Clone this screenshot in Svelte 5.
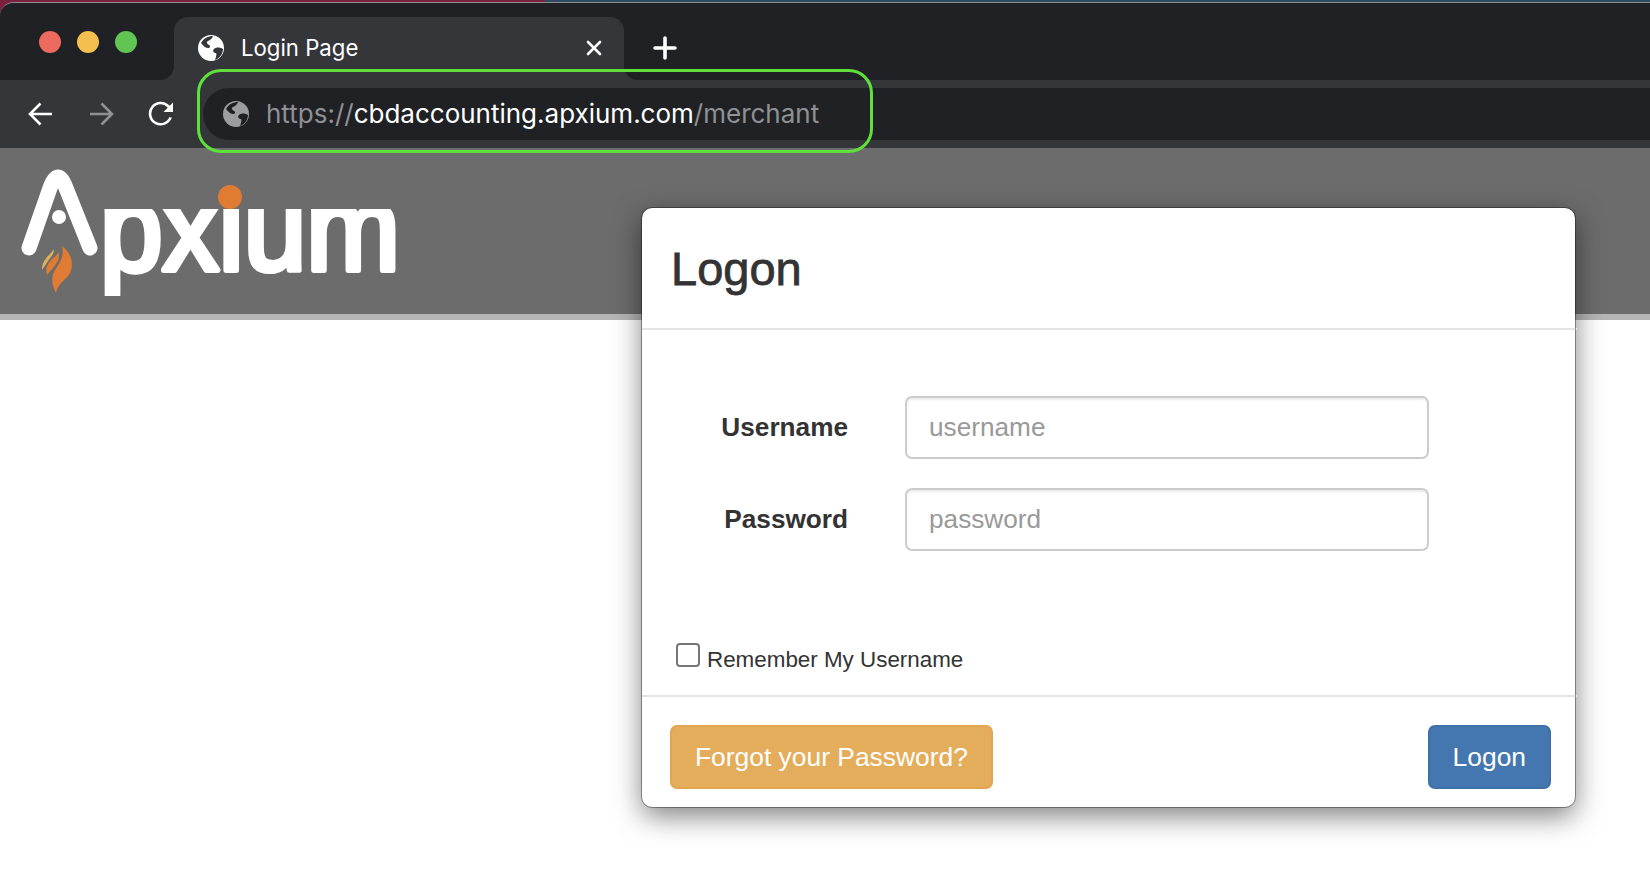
<script>
  let username = $state('');
  let password = $state('');
  let remember = $state(false);
</script>

<div class="window">
  <div class="wallpaper"></div>

  <div class="chrome">
    <div class="tabstrip">
      <div class="lights">
        <span class="light red"></span>
        <span class="light yellow"></span>
        <span class="light green"></span>
      </div>
      <div class="tab-slot">
        <div class="tab">
          <svg class="favicon" viewBox="0 0 26 26">
            <circle cx="13" cy="13" r="13" fill="#fff" />
            <path d="M3 8C6 3 10 1 15 1 14 4 12 5 10 6 8 7 9 9 11 10 13 11 12 13 10 13 7 13 5 10 3 8z" fill="#35363a" />
            <path d="M25 14C22 12 18 12 16 14 14 16 16 18 18 18 19 19 18 22 17 25 21 24 25 19 25 14z" fill="#35363a" />
          </svg>
          <span class="tab-title">Login Page</span>
          <svg class="close" viewBox="0 0 16 16">
            <path d="M2 2l12 12M14 2L2 14" stroke="#fff" stroke-width="2.6" stroke-linecap="round" />
          </svg>
        </div>
      </div>
      <div class="tab-rest">
        <svg class="plus" viewBox="0 0 24 24">
          <path d="M12 2v20M2 12h20" stroke="#fff" stroke-width="3.6" stroke-linecap="round" />
        </svg>
      </div>
    </div>

    <div class="toolbar">
      <div class="nav">
        <svg viewBox="0 0 26 26">
          <path d="M24 13H3M12.5 2.5L2 13l10.5 10.5" class="nav-line" />
        </svg>
        <svg class="dim" viewBox="0 0 26 26">
          <path d="M2 13h21M13.5 2.5L24 13 13.5 23.5" class="nav-line" />
        </svg>
        <svg viewBox="0 0 26 26">
          <path d="M22.6 16.4A10.6 10.6 0 1 1 20.5 5.5L24 9" class="nav-line" />
          <path d="M25 1.5V11H15.5z" fill="#fff" />
        </svg>
      </div>
      <div class="omnibox">
        <svg class="favicon" viewBox="0 0 26 26">
          <circle cx="13" cy="13" r="13" fill="#9b9da0" />
          <path d="M3 8C6 3 10 1 15 1 14 4 12 5 10 6 8 7 9 9 11 10 13 11 12 13 10 13 7 13 5 10 3 8z" fill="#202124" />
          <path d="M25 14C22 12 18 12 16 14 14 16 16 18 18 18 19 19 18 22 17 25 21 24 25 19 25 14z" fill="#202124" />
        </svg>
        <span class="url"><span class="muted">https://</span>cbdaccounting.apxium.com<span class="muted">/merchant</span></span>
      </div>
    </div>

    <!-- green highlight drawn on top of the screenshot -->
    <div class="highlight"></div>
  </div>

  <header class="site-header">
    <svg class="logo" viewBox="0 148 420 166" role="img" aria-label="Apxium">
      <defs>
        <clipPath id="below-dot">
          <rect x="90" y="209" width="330" height="87" rx="6" />
        </clipPath>
      </defs>
      <path d="M29 248L50 188Q58 166 66 188L90 248" fill="none" stroke="#fff" stroke-width="15" stroke-linecap="round" stroke-linejoin="round" />
      <circle cx="59" cy="217" r="7" fill="#fff" />
      <path d="M62 246c10 8 12 18 8 27-3 6-12 10-14 20-4-7-5-15-2-21 4-8 11-14 8-26z" fill="#e07b34" />
      <path d="M58 252c3 6-1 11-5 16l-6 7c-2-7 1-12 5-16 3-2 5-4 6-7z" fill="#e07b34" />
      <path d="M54 249c0 5-3 8-6 12l-6 9c0-6 2-9 5-13 3-3 5-5 7-8z" fill="#dfb25a" />
      <text x="100" y="270" class="wordmark" clip-path="url(#below-dot)" textLength="300" lengthAdjust="spacingAndGlyphs">pxium</text>
      <circle cx="230" cy="197" r="12" fill="#e07b34" />
    </svg>
  </header>

  <main class="card">
    <div class="card-head">
      <h3>Logon</h3>
    </div>
    <div class="card-body">
      <div class="field">
        <label for="username">Username</label>
        <input id="username" type="text" placeholder="username" bind:value={username} />
      </div>
      <div class="field">
        <label for="password">Password</label>
        <input id="password" type="password" placeholder="password" bind:value={password} />
      </div>
      <label class="remember">
        <input type="checkbox" bind:checked={remember} />
        <span>Remember My Username</span>
      </label>
    </div>
    <div class="card-foot">
      <button class="btn forgot">Forgot your Password?</button>
      <button class="btn logon">Logon</button>
    </div>
  </main>
</div>

<style>
  :global(body) {
    margin: 0;
    background: #fff;
    font-family: 'Liberation Sans', Arial, sans-serif;
  }

  .window {
    width: 1650px;
    height: 887px;
    overflow: hidden;
  }

  .wallpaper {
    height: 2px;
    background: linear-gradient(to right, #7c2040 0, #7c2040 545px, #2d4a63 545px);
  }

  .chrome {
    position: relative;
    background: #7c2040;
  }

  .tabstrip {
    display: flex;
    height: 78px;
    box-sizing: border-box;
    background: #35363a;
    border-top: 1px solid #8f8f8f;
    border-top-left-radius: 14px;
    overflow: hidden;
    font-family: Inter, 'Noto Sans', sans-serif;
  }

  .lights {
    width: 174px;
    display: flex;
    gap: 16px;
    padding: 28px 0 0 39px;
    box-sizing: border-box;
    background: #202124;
    border-bottom-right-radius: 14px;
  }

  .light {
    width: 22px;
    height: 22px;
    border-radius: 50%;
  }
  .red { background: #ed6a5e; }
  .yellow { background: #f4bf4f; }
  .green { background: #61c554; }

  .tab-slot {
    width: 450px;
    background: #202124;
    padding-top: 14px;
    box-sizing: border-box;
  }

  .tab {
    height: 63px;
    background: #35363a;
    border-radius: 14px 14px 0 0;
    display: flex;
    align-items: flex-start;
    padding: 18px 22px 0 24px;
    box-sizing: border-box;
    color: #fff;
  }

  .favicon {
    width: 26px;
    height: 26px;
    flex: none;
  }

  .tab-title {
    margin-left: 17px;
    font-size: 22.2px;
    line-height: 26px;
    flex: 1;
  }

  .close {
    width: 16px;
    height: 16px;
    margin-top: 5px;
  }

  .tab-rest {
    flex: 1;
    background: #202124;
    border-bottom-left-radius: 14px;
    padding: 33px 0 0 29px;
  }

  .plus {
    display: block;
    width: 24px;
    height: 24px;
  }

  .toolbar {
    display: flex;
    align-items: center;
    height: 68px;
    background: #35363a;
  }

  .nav {
    width: 203px;
    flex: none;
    display: flex;
    gap: 34px;
    padding-left: 28px;
    box-sizing: border-box;
  }

  .nav svg {
    width: 26px;
    height: 26px;
  }

  .nav-line {
    fill: none;
    stroke: #fff;
    stroke-width: 2.6;
  }

  .dim {
    opacity: 0.45;
  }

  .omnibox {
    flex: 1;
    height: 52px;
    background: #202124;
    border-radius: 26px 0 0 26px;
    display: flex;
    align-items: center;
    padding-left: 20px;
  }

  .url {
    margin-left: 17px;
    font-family: Inter, 'Noto Sans', sans-serif;
    font-size: 26px;
    color: #fff;
    margin-top: -1px;
  }

  .muted {
    color: #8f9194;
  }

  .highlight {
    position: absolute;
    left: 197px;
    top: 67px;
    width: 670px;
    height: 78px;
    border: 3px solid #5fe03a;
    border-radius: 24px;
  }

  .site-header {
    height: 166px;
    background: #6c6c6c;
    border-bottom: 6px solid #b5b5b5;
  }

  .logo {
    display: block;
    width: 420px;
    height: 166px;
  }

  .wordmark {
    font-family: 'Liberation Sans', sans-serif;
    font-size: 118px;
    fill: #fff;
    stroke: #fff;
    stroke-width: 6;
    stroke-linejoin: round;
  }

  .card {
    width: 933px;
    margin: -112px 0 0 642px;
    position: relative;
    background: #fff;
    border-radius: 10px;
    outline: 1px solid rgba(0, 0, 0, 0.35);
    box-shadow: 0 9px 28px rgba(0, 0, 0, 0.5);
    color: #333;
  }

  .card-head {
    height: 120px;
    padding: 0 29px;
    border-bottom: 2px solid #e5e5e5;
    margin-right: -2px;
    display: flex;
    align-items: center;
  }

  h3 {
    margin: 0;
    font-size: 47px;
    font-weight: 500;
    -webkit-text-stroke: 0.8px #333;
  }

  .card-body {
    padding: 66px 0 0;
    height: 365px;
    box-sizing: border-box;
    display: flex;
    flex-direction: column;
  }

  .field {
    display: grid;
    grid-template-columns: 206px 524px;
    column-gap: 57px;
    align-items: center;
    margin-bottom: 29px;
  }

  .field label {
    text-align: right;
    font-size: 26.2px;
    font-weight: 700;
  }

  .field input {
    height: 63px;
    box-sizing: border-box;
    border: 2px solid #ccc;
    border-radius: 7px;
    padding: 0 22px;
    font: 26.2px 'Liberation Sans', sans-serif;
    color: #555;
    outline: none;
    box-shadow: inset 0 2px 2px rgba(0, 0, 0, 0.075);
  }

  .field input::placeholder {
    color: #999;
  }

  .remember {
    display: flex;
    align-items: flex-start;
    margin: 63px 0 0 34px;
    font-size: 22.4px;
  }

  .remember input {
    appearance: none;
    width: 24px;
    height: 24px;
    margin: 0 7px 0 0;
    border: 2px solid #767676;
    border-radius: 4px;
    background: #fff;
  }

  .remember span {
    margin-top: 4px;
  }

  .card-foot {
    border-top: 2px solid #e5e5e5;
    margin-right: -2px;
    padding: 28px 26px 18px 28px;
    display: flex;
    justify-content: space-between;
  }

  .btn {
    height: 64px;
    border-radius: 7px;
    font: 26.4px 'Liberation Sans', sans-serif;
    color: #fff;
    padding: 0 23px;
    border: 2px solid;
  }

  .forgot {
    background: #e4ad5c;
    border-color: #e3a64f;
  }

  .logon {
    background: #4477b0;
    border-color: #3f70a8;
  }
</style>
